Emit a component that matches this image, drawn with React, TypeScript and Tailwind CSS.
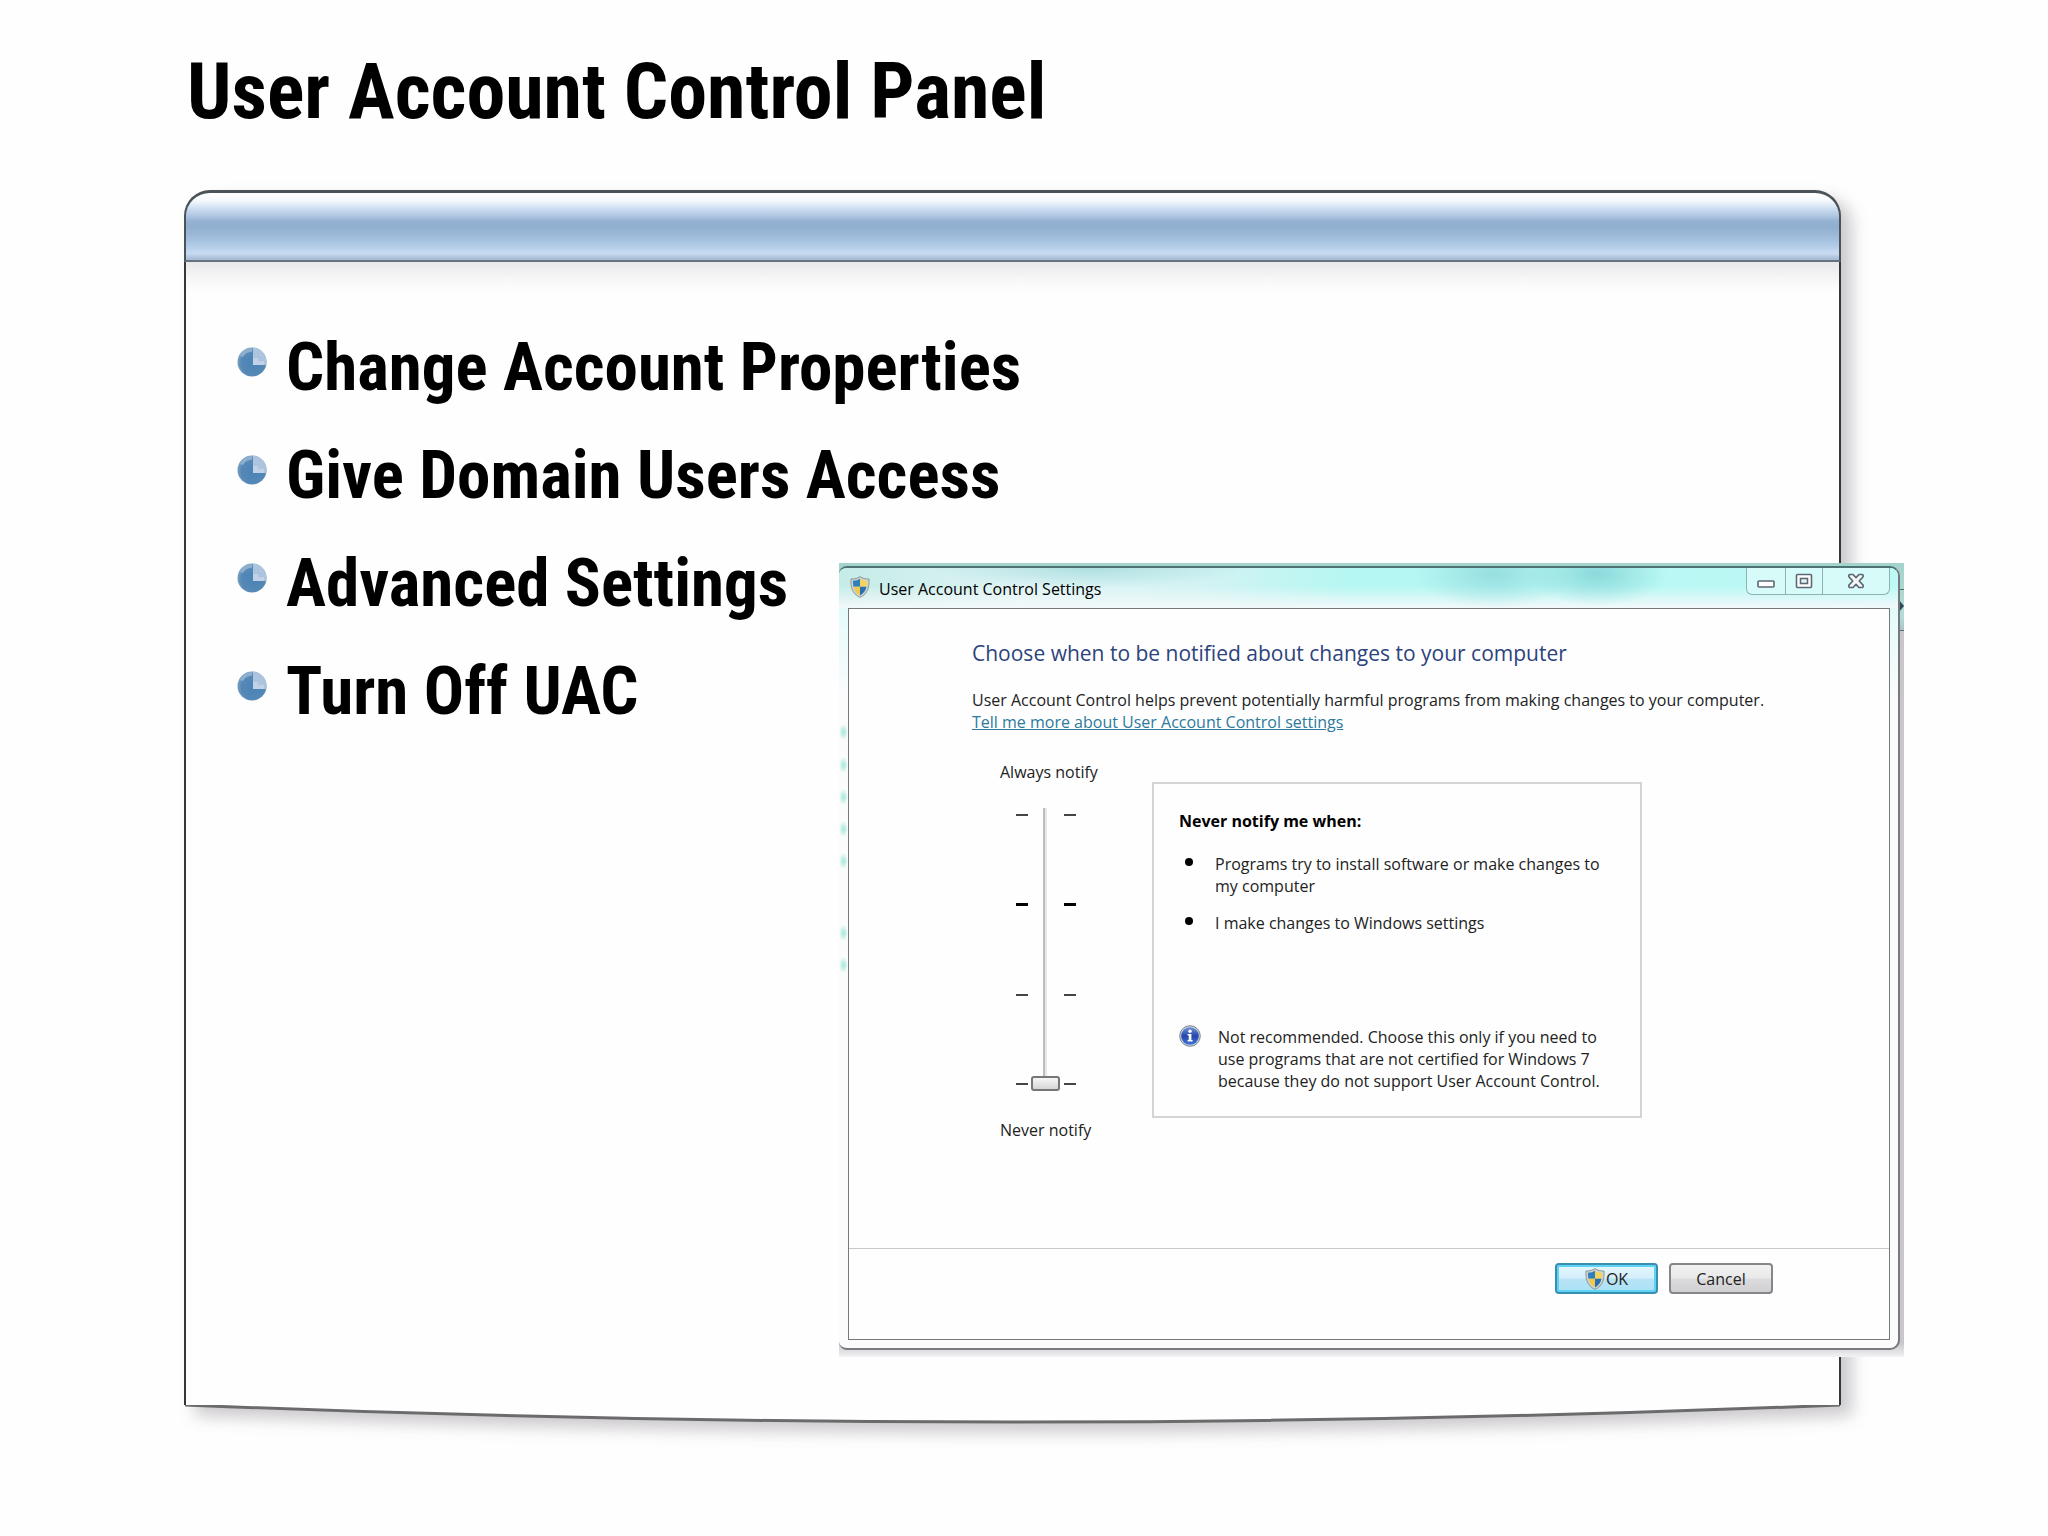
const topics = [
  "Change Account Properties",
  "Give Domain Users Access",
  "Advanced Settings",
  "Turn Off UAC",
];

const edgeGlows = [156, 189, 221, 253, 285, 357, 389];

function PieBullet() {
  return (
    <svg viewBox="0 0 30 30" className="mt-[20px] h-[30px] w-[30px] shrink-0" aria-hidden="true">
      <defs>
        <radialGradient id="pie" cx="0.55" cy="0.55" r="0.6">
          <stop offset="0" stopColor="#4a83b6" />
          <stop offset="0.7" stopColor="#5588b5" />
          <stop offset="1" stopColor="#86a9c9" />
        </radialGradient>
      </defs>
      <circle cx="15" cy="15" r="14.5" fill="url(#pie)" />
      <path d="M16 18V0.5A14.5 14.5 0 0 1 29.2 18Z" fill="#adc3de" />
      <path d="M16 18V11H21V14H27V18Z" fill="#c6d5ea" opacity="0.8" />
      <path d="M3 9A14 14 0 0 1 15 1V5A11 11 0 0 0 6 10Z" fill="#a9c2da" opacity="0.6" />
    </svg>
  );
}

function Shield({ className }: { className: string }) {
  return (
    <svg viewBox="0 0 20 22" className={className} aria-hidden="true">
      <path
        d="M10 0.6C7.5 2.4 4.6 3 1 3C0.6 10 1.6 17.6 10 21.4C18.4 17.6 19.4 10 19 3C15.4 3 12.5 2.4 10 0.6Z"
        fill="#cfd5d0"
        stroke="#858f8d"
        strokeWidth="0.9"
      />
      <path d="M10 2.8C8 4 5.6 4.7 3 4.8C2.9 6.8 3 8.9 3.5 10.8H10Z" fill="#2f7fbe" />
      <path d="M10 2.8C12 4 14.4 4.7 17 4.8C17.1 6.8 17 8.9 16.5 10.8H10Z" fill="#f3d35a" />
      <path d="M3.5 10.8C4.4 14.6 6.3 17.4 10 19.4V10.8Z" fill="#efc94a" />
      <path d="M16.5 10.8C15.6 14.6 13.7 17.4 10 19.4V10.8Z" fill="#2a6fae" />
    </svg>
  );
}

function InfoIcon() {
  return (
    <svg viewBox="0 0 22 22" className="-mt-px h-[22px] w-[22px] shrink-0" aria-hidden="true">
      <defs>
        <linearGradient id="info" x1="0" y1="0" x2="0" y2="1">
          <stop offset="0" stopColor="#6f93dc" />
          <stop offset="0.5" stopColor="#2547ad" />
          <stop offset="1" stopColor="#3f74d6" />
        </linearGradient>
      </defs>
      <circle cx="11" cy="11" r="10.3" fill="#c9ced8" stroke="#7d879a" strokeWidth="1" />
      <circle cx="11" cy="11" r="8.8" fill="url(#info)" />
      <circle cx="11" cy="6.3" r="1.7" fill="#fff" />
      <path d="M8.6 9H12.4V15H13.6V16.6H8.6V15H9.7V10.6H8.6Z" fill="#fff" />
    </svg>
  );
}

function Ticks() {
  return (
    <div className="flex w-3 flex-col justify-between py-[6px]" aria-hidden="true">
      <span className="h-[2px] bg-[#444]" />
      <span className="h-[3px] bg-black" />
      <span className="h-[2px] bg-[#444]" />
      <span className="h-[2px] bg-[#444]" />
    </div>
  );
}

function WindowControls() {
  return (
    <div className="flex h-[27px] overflow-hidden rounded-b-md border border-t-0 border-[#8fb3b1] bg-[#d6fbf8]">
      <button aria-label="Minimize" className="flex w-[39px] items-center justify-center border-r border-[#8fb3b1]">
        <svg viewBox="0 0 18 16" className="h-4 w-[18px]">
          <rect x="1" y="8" width="16" height="6" rx="1" fill="#fff" stroke="#5c6873" strokeWidth="1.6" />
        </svg>
      </button>
      <button aria-label="Maximize" className="flex w-[37px] items-center justify-center border-r border-[#8fb3b1]">
        <svg viewBox="0 0 18 16" className="h-4 w-[18px]">
          <rect x="1.5" y="1.5" width="15" height="13" rx="1" fill="#fff" stroke="#5c6873" strokeWidth="1.6" />
          <rect x="5.5" y="5.5" width="7" height="5" fill="#e6f4f4" stroke="#5c6873" strokeWidth="1.6" />
        </svg>
      </button>
      <button aria-label="Close" className="flex w-[66px] items-center justify-center">
        <svg viewBox="0 0 18 16" className="h-4 w-[18px]">
          <path
            d="M2.4 1.5H6L9 4.6L12 1.5H15.6Q17 3.2 15.4 4.6L12.2 8L15.4 11.4Q17 12.8 15.6 14.5H12L9 11.4L6 14.5H2.4Q1 12.8 2.6 11.4L5.8 8L2.6 4.6Q1 3.2 2.4 1.5Z"
            fill="#f4f6f8"
            stroke="#5c6873"
            strokeWidth="1.6"
            strokeLinejoin="round"
          />
        </svg>
      </button>
    </div>
  );
}

function SettingsDialog() {
  return (
    <div
      role="dialog"
      aria-labelledby="dialog-title"
      className="absolute top-[373px] -right-[63px] w-[1065px] overflow-hidden bg-[linear-gradient(180deg,#a3d3cc_0px,#b4dcd6_54px,#a9c6c6_66px,#c9c6cb_68px,#c9c6cb_780px,#f3f2f4_100%)] pt-[3px] pr-[4px] pb-[7px] font-['Open_Sans','Noto_Sans',sans-serif] text-[16px] leading-[22px] text-[#222]"
    >
      <div className="absolute top-[26px] right-0 h-[42px] w-[5px] border-y border-[#4e6b70]">
        <svg viewBox="0 0 5 12" className="mt-2.5 h-3 w-[5px]" aria-hidden="true">
          <path d="M0 0L5 6L0 12Z" fill="#2f4858" />
        </svg>
      </div>
      <div className="relative rounded-r-[10px] rounded-l-[8px] border-y-2 border-r-2 border-t-[#4d7274] border-r-[#77797c] border-b-[#77797c] bg-[linear-gradient(180deg,#d2f7f5_0px,#e6fbfa_50px,#fbfbfc_130px)] pr-[8px] pb-[8px] pl-[9px]">
        <div className="absolute inset-x-0 top-0 h-10 rounded-t-[8px] bg-[radial-gradient(80px_34px_at_655px_6px,#8fd8dccc,transparent),radial-gradient(70px_32px_at_758px_6px,#7fd2d5cc,transparent),radial-gradient(160px_20px_at_250px_0px,#aedfe0,transparent),linear-gradient(180deg,transparent_45%,#f3f9fa_100%),linear-gradient(90deg,#c5ece8_0%,#dff4f5_18%,#d2f3f3_35%,#b5f7f2_48%,#bdf9f6_100%)]" />
        {edgeGlows.map((y) => (
          <span
            key={y}
            className="absolute left-0 h-4 w-[9px] bg-[radial-gradient(closest-side,#a8e8da,#c9f1e8_50%,transparent)]"
            style={{ top: y }}
          />
        ))}
        <div className="relative flex h-10 items-start">
          <Shield className="mt-[8px] mr-[9px] ml-[2px] h-[22px] w-[20px]" />
          <h2 id="dialog-title" className="mt-[10px] flex-1 text-black">
            User Account Control Settings
          </h2>
          <WindowControls />
        </div>
        <div className="relative flex flex-col border border-[#73797c] bg-[#fefefe]">
          <div className="pt-[30px] pl-[123px]">
            <h3 className="text-[21px] leading-[28px] text-[#2c437c]">
              Choose when to be notified about changes to your computer
            </h3>
            <p className="mt-[22px]">
              User Account Control helps prevent potentially harmful programs from making changes to your computer.
            </p>
            <a href="#more" className="block w-fit text-[#2d7a9c] underline">
              Tell me more about User Account Control settings
            </a>
            <div className="mt-[28px] flex items-start">
              <div className="w-[180px] pl-7">
                <label htmlFor="level">Always notify</label>
                <div className="mt-[25px] ml-[16px] flex h-[283px]">
                  <Ticks />
                  <input
                    id="level"
                    type="range"
                    min={0}
                    max={3}
                    defaultValue={0}
                    className="mr-1 ml-[3px] h-full w-[29px] appearance-none bg-transparent [direction:rtl] [writing-mode:vertical-lr] [&::-webkit-slider-runnable-track]:h-full [&::-webkit-slider-runnable-track]:w-[29px] [&::-webkit-slider-runnable-track]:bg-[linear-gradient(90deg,transparent_12px,#bdbdc0_12px,#bdbdc0_14px,#e8e8ea_14px,#e8e8ea_16px,transparent_16px)] [&::-webkit-slider-thumb]:h-[15px] [&::-webkit-slider-thumb]:w-[29px] [&::-webkit-slider-thumb]:appearance-none [&::-webkit-slider-thumb]:rounded-[3px] [&::-webkit-slider-thumb]:border-2 [&::-webkit-slider-thumb]:border-[#77777a] [&::-webkit-slider-thumb]:bg-[linear-gradient(180deg,#f6f6f6,#d6d6d8)]"
                  />
                  <Ticks />
                </div>
                <p className="mt-[28px]">Never notify</p>
              </div>
              <section className="mt-[21px] w-[490px] border-2 border-[#d5d3d6] pt-[26px] pr-6 pb-[24px] pl-[25px]">
                <h4 className="font-bold text-black">Never notify me when:</h4>
                <ul className="mt-[21px] flex flex-col gap-[15px]">
                  <li className="flex pl-[6px]">
                    <span className="mt-[5px] mr-[22px] h-2 w-2 shrink-0 rounded-full bg-black" />
                    Programs try to install software or make changes to my computer
                  </li>
                  <li className="flex pl-[6px]">
                    <span className="mt-[5px] mr-[22px] h-2 w-2 shrink-0 rounded-full bg-black" />
                    I make changes to Windows settings
                  </li>
                </ul>
                <div className="mt-[92px] flex gap-[17px]">
                  <InfoIcon />
                  <p>
                    Not recommended. Choose this only if you need to use programs that are not certified for Windows 7
                    because they do not support User Account Control.
                  </p>
                </div>
              </section>
            </div>
          </div>
          <div className="mt-[107px] flex h-[91px] items-start justify-end gap-[11px] border-t border-[#c9c7ca] pt-[14px] pr-[116px]">
            <button className="flex h-[31px] w-[103px] items-center justify-center gap-px rounded-[4px] border-2 border-[#3a8fb0] bg-[linear-gradient(180deg,#e4f6fd_0%,#d5effa_48%,#b9e2f5_52%,#a9e2f7_100%)] shadow-[inset_0_0_0_2px_#5fd3f3]">
              <Shield className="h-[22px] w-[20px]" />
              OK
            </button>
            <button className="h-[31px] w-[104px] rounded-[4px] border-2 border-[#86868a] bg-[linear-gradient(180deg,#f1f1f1_0%,#e9e9ea_48%,#dcdcde_52%,#d0cfd2_100%)]">
              Cancel
            </button>
          </div>
        </div>
      </div>
    </div>
  );
}

export default function App() {
  return (
    <main className="min-h-screen bg-[#fefefe] pr-[207px] pl-[184px] font-['Roboto_Condensed','Liberation_Sans',sans-serif] text-black">
      <h1 className="pt-[52px] pl-[3px] text-[78px] leading-[80px] font-bold">User Account Control Panel</h1>
      <div className="relative mt-[58px]">
        <div className="drop-shadow-[11px_9px_8px_rgba(60,50,60,0.26)]">
          <div className="h-[72px] rounded-t-[26px] border-2 border-t-[3px] border-[#4a5358] border-b-[#65737f] bg-[linear-gradient(180deg,#ffffff_0%,#f4f8fd_12%,#cbdcf2_24%,#b4c9e3_33%,#95b2d3_42%,#90aecd_50%,#9bb8d8_62%,#adc8e4_76%,#c8dbf2_90%,#a9bed6_98%)]" />
          <div className="min-h-[1143px] border-x-2 border-[#33383b] bg-[linear-gradient(180deg,#e8e8ea_0px,#f6f6f7_16px,#fefefe_30px)] pt-[65px] pl-[51px]">
            <ul className="flex flex-col gap-[28px] text-[67px] leading-[80px] font-bold">
              {topics.map((topic) => (
                <li key={topic} className="flex items-start gap-[19px]">
                  <PieBullet />
                  {topic}
                </li>
              ))}
            </ul>
          </div>
          <svg viewBox="0 0 1656 20" preserveAspectRatio="none" className="block h-5 w-full" aria-hidden="true">
            <path d="M1 0Q828 34 1655 0" fill="#fefefe" stroke="#6b6b6e" strokeWidth="3" />
          </svg>
        </div>
        <SettingsDialog />
      </div>
    </main>
  );
}
